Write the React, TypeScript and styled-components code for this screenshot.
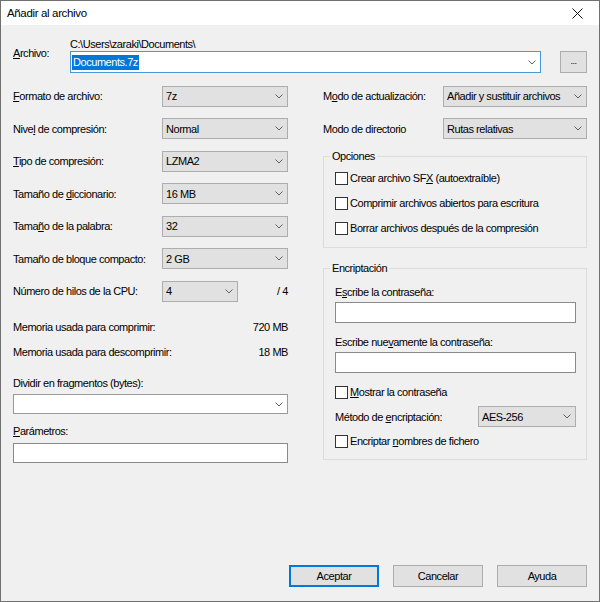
import React from "react";
import styled, { createGlobalStyle, css } from "styled-components";

const GlobalStyle = createGlobalStyle`
  html, body {
    margin: 0;
    padding: 0;
    background: #f0f0f0;
  }
  body {
    font-family: "Segoe UI", "Liberation Sans", Arial, sans-serif;
    font-size: 11px;
    letter-spacing: -0.45px;
    color: #000;
  }
`;

const Window = styled.div`
  width: 600px;
  height: 602px;
  box-sizing: border-box;
  border: 1px solid #707070;
  display: flex;
  flex-direction: column;
  background: #f0f0f0;
`;

const TitleBar = styled.div`
  height: 24px;
  flex: none;
  background: #fff;
  display: flex;
  align-items: center;
  justify-content: space-between;
  padding: 0 16px 0 6px;
`;

const TitleText = styled.span`
  font-size: 11.5px;
  letter-spacing: -0.35px;
`;

const CloseIcon = () => (
  <svg width="11" height="11" viewBox="0 0 11 11">
    <path d="M0.5 0.5 L10.5 10.5 M10.5 0.5 L0.5 10.5" stroke="#111" strokeWidth="1" fill="none" />
  </svg>
);

const Body = styled.div`
  flex: 1;
  display: flex;
  flex-direction: column;
  padding: 12px 12px 14px 12px;
`;

const FileGrid = styled.div`
  display: grid;
  grid-template-columns: 57px 1fr 46px;
  grid-template-rows: 14px 22px;
`;

const FileLabel = styled.div`
  grid-row: 1 / span 2;
  padding-top: 9px;
  line-height: 14px;
`;

const PathText = styled.div`
  line-height: 14px;
  grid-column: 2 / span 2;
`;

const Key = styled.u`
  text-decoration: underline;
  text-underline-offset: 1px;
  text-decoration-thickness: 1px;
`;

type Tone = "list" | "edit" | "focus";

const Combo = styled.div<{ $tone?: Tone; $width?: number; $height?: number }>`
  box-sizing: border-box;
  height: ${(p) => p.$height ?? 21}px;
  width: ${(p) => (p.$width ? `${p.$width}px` : "100%")};
  display: flex;
  align-items: center;
  justify-content: space-between;
  padding: 0 4px 0 3px;
  border: 1px solid #adadad;
  background: #e1e1e1;
  ${(p) =>
    p.$tone === "edit" &&
    css`
      background: #fff;
      border-color: #9a9a9a;
    `}
  ${(p) =>
    p.$tone === "focus" &&
    css`
      background: #fff;
      border-color: #4a98dc;
      padding-left: 1px;
    `}
`;

const ComboText = styled.span`
  white-space: nowrap;
`;

const SelectedText = styled.span`
  background: #0078d7;
  color: #fff;
  line-height: 15px;
  padding: 0 1px;
`;

const Chevron = () => (
  <svg width="8" height="5" viewBox="0 0 8 5" style={{ flex: "none" }}>
    <path d="M0.5 0.5 L4 4 L7.5 0.5" stroke="#606060" strokeWidth="1" fill="none" />
  </svg>
);

const SmallButton = styled.div`
  justify-self: end;
  width: 27px;
  height: 22px;
  box-sizing: border-box;
  border: 1px solid #adadad;
  background: #e1e1e1;
  display: flex;
  align-items: center;
  justify-content: center;
  font-size: 9px;
  padding-bottom: 3px;
`;

const Columns = styled.div`
  display: grid;
  grid-template-columns: 275px 264px;
  column-gap: 35px;
  margin-top: 12.5px;
  align-items: start;
`;

const Column = styled.div`
  display: flex;
  flex-direction: column;
`;

const FieldList = styled.div<{ $labelWidth: number }>`
  display: grid;
  grid-template-columns: ${(p) => p.$labelWidth}px 1fr;
  grid-auto-rows: 21px;
  row-gap: 11.5px;
  align-items: center;
`;

const Label = styled.div<{ $gap?: number }>`
  line-height: 14px;
  white-space: nowrap;
  margin-top: ${(p) => p.$gap ?? 0}px;
`;

const CpuCell = styled.div`
  display: flex;
  align-items: center;
  justify-content: space-between;
`;

const InfoList = styled.div`
  display: flex;
  flex-direction: column;
  gap: 11px;
  margin-top: 18.5px;
`;

const InfoRow = styled.div`
  display: flex;
  justify-content: space-between;
  line-height: 14px;
`;

const Spaced = styled.div<{ $gap: number }>`
  margin-top: ${(p) => p.$gap}px;
`;

const TextBox = styled.div<{ $gap?: number; $height?: number }>`
  box-sizing: border-box;
  margin-top: ${(p) => p.$gap ?? 0}px;
  height: ${(p) => p.$height ?? 21}px;
  background: #fff;
  border: 1px solid #8a8a8a;
`;

const GroupBox = styled.fieldset<{ $gap: number }>`
  margin: ${(p) => p.$gap}px 0 0 0;
  padding: 0 10px 0 11px;
  border: 1px solid #dcdcdc;
  min-inline-size: 0;
  display: flex;
  flex-direction: column;
`;

const Legend = styled.legend`
  padding: 0 2px;
  margin-left: -5px;
  line-height: 14px;
`;

const GroupBody = styled.div<{ $top: number; $bottom: number; $gap?: number }>`
  display: flex;
  flex-direction: column;
  gap: ${(p) => p.$gap ?? 0}px;
  padding: ${(p) => p.$top}px 0 ${(p) => p.$bottom}px 0;
`;

const CheckRow = styled.div<{ $gap?: number }>`
  display: flex;
  align-items: center;
  gap: 2px;
  height: 16px;
  margin-top: ${(p) => p.$gap ?? 0}px;
  white-space: nowrap;
`;

const CheckBox = styled.span`
  width: 13px;
  height: 13px;
  box-sizing: border-box;
  border: 1px solid #333;
  background: #fff;
  flex: none;
`;

const MethodRow = styled.div`
  display: grid;
  grid-template-columns: 143px 98px;
  align-items: center;
  margin-top: 6px;
`;

const Footer = styled.div`
  margin-top: auto;
  display: flex;
  justify-content: flex-end;
  gap: 14px;
`;

const DialogButton = styled.div<{ $default?: boolean }>`
  width: 90px;
  height: 22px;
  box-sizing: border-box;
  border: 1px solid #adadad;
  background: #e1e1e1;
  display: flex;
  align-items: center;
  justify-content: center;
  ${(p) =>
    p.$default &&
    css`
      border: 2px solid #0078d7;
    `}
`;

const leftFields: { label: React.ReactNode; value: string }[] = [
  { label: <><Key>F</Key>ormato de archivo:</>, value: "7z" },
  { label: <>Nive<Key>l</Key> de compresión:</>, value: "Normal" },
  { label: <><Key>T</Key>ipo de compresión:</>, value: "LZMA2" },
  { label: <>Tamaño de <Key>d</Key>iccionario:</>, value: "16 MB" },
  { label: <>Tama<Key>ñ</Key>o de la palabra:</>, value: "32" },
  { label: <>Tamaño de bloque compacto:</>, value: "2 GB" },
];

export default function App() {
  return (
    <>
      <GlobalStyle />
      <Window>
        <TitleBar>
          <TitleText>Añadir al archivo</TitleText>
          <CloseIcon />
        </TitleBar>
        <Body>
          <FileGrid>
            <FileLabel>
              <Key>A</Key>rchivo:
            </FileLabel>
            <PathText>C:\Users\zaraki\Documents\</PathText>
            <Combo $tone="focus" $height={22}>
              <SelectedText>Documents.7z</SelectedText>
              <Chevron />
            </Combo>
            <SmallButton>...</SmallButton>
          </FileGrid>

          <Columns>
            <Column>
              <FieldList $labelWidth={149}>
                {leftFields.map((f, i) => (
                  <React.Fragment key={i}>
                    <Label>{f.label}</Label>
                    <Combo>
                      <ComboText>{f.value}</ComboText>
                      <Chevron />
                    </Combo>
                  </React.Fragment>
                ))}
                <Label>Número de hilos de la CPU:</Label>
                <CpuCell>
                  <Combo $width={76}>
                    <ComboText>4</ComboText>
                    <Chevron />
                  </Combo>
                  <span>/ 4</span>
                </CpuCell>
              </FieldList>

              <InfoList>
                <InfoRow>
                  <span>Memoria usada para comprimir:</span>
                  <span>720 MB</span>
                </InfoRow>
                <InfoRow>
                  <span>Memoria usada para descomprimir:</span>
                  <span>18 MB</span>
                </InfoRow>
              </InfoList>

              <Label $gap={17}>Dividir en fragmentos (bytes):</Label>
              <Spaced $gap={4}>
                <Combo $tone="edit" $height={20}>
                  <ComboText />
                  <Chevron />
                </Combo>
              </Spaced>
              <Label $gap={10}>
                <Key>P</Key>arámetros:
              </Label>
              <TextBox $gap={5} $height={20} />
            </Column>

            <Column>
              <FieldList $labelWidth={120}>
                <Label>
                  M<Key>o</Key>do de actualización:
                </Label>
                <Combo>
                  <ComboText>Añadir y sustituir archivos</ComboText>
                  <Chevron />
                </Combo>
                <Label>Modo de directorio</Label>
                <Combo>
                  <ComboText>Rutas relativas</ComboText>
                  <Chevron />
                </Combo>
              </FieldList>

              <GroupBox $gap={10}>
                <Legend>Opciones</Legend>
                <GroupBody $top={7} $bottom={11} $gap={9}>
                  <CheckRow>
                    <CheckBox />
                    <span>
                      Crear archivo SF<Key>X</Key> (autoextraíble)
                    </span>
                  </CheckRow>
                  <CheckRow>
                    <CheckBox />
                    <span>Comprimir archivos abiertos para escritura</span>
                  </CheckRow>
                  <CheckRow>
                    <CheckBox />
                    <span>Borrar archivos después de la compresión</span>
                  </CheckRow>
                </GroupBody>
              </GroupBox>

              <GroupBox $gap={13}>
                <Legend>Encriptación</Legend>
                <GroupBody $top={10} $bottom={10}>
                  <Label>
                    E<Key>s</Key>cribe la contraseña:
                  </Label>
                  <TextBox $gap={3} />
                  <Label $gap={12}>
                    Escribe nue<Key>v</Key>amente la contraseña:
                  </Label>
                  <TextBox $gap={3} />
                  <CheckRow $gap={11}>
                    <CheckBox />
                    <span>
                      <Key>M</Key>ostrar la contraseña
                    </span>
                  </CheckRow>
                  <MethodRow>
                    <Label>
                      Método de <Key>e</Key>ncriptación:
                    </Label>
                    <Combo>
                      <ComboText>AES-256</ComboText>
                      <Chevron />
                    </Combo>
                  </MethodRow>
                  <CheckRow $gap={6}>
                    <CheckBox />
                    <span>
                      Encriptar <Key>n</Key>ombres de fichero
                    </span>
                  </CheckRow>
                </GroupBody>
              </GroupBox>
            </Column>
          </Columns>

          <Footer>
            <DialogButton $default>Aceptar</DialogButton>
            <DialogButton>Cancelar</DialogButton>
            <DialogButton>Ayuda</DialogButton>
          </Footer>
        </Body>
      </Window>
    </>
  );
}
